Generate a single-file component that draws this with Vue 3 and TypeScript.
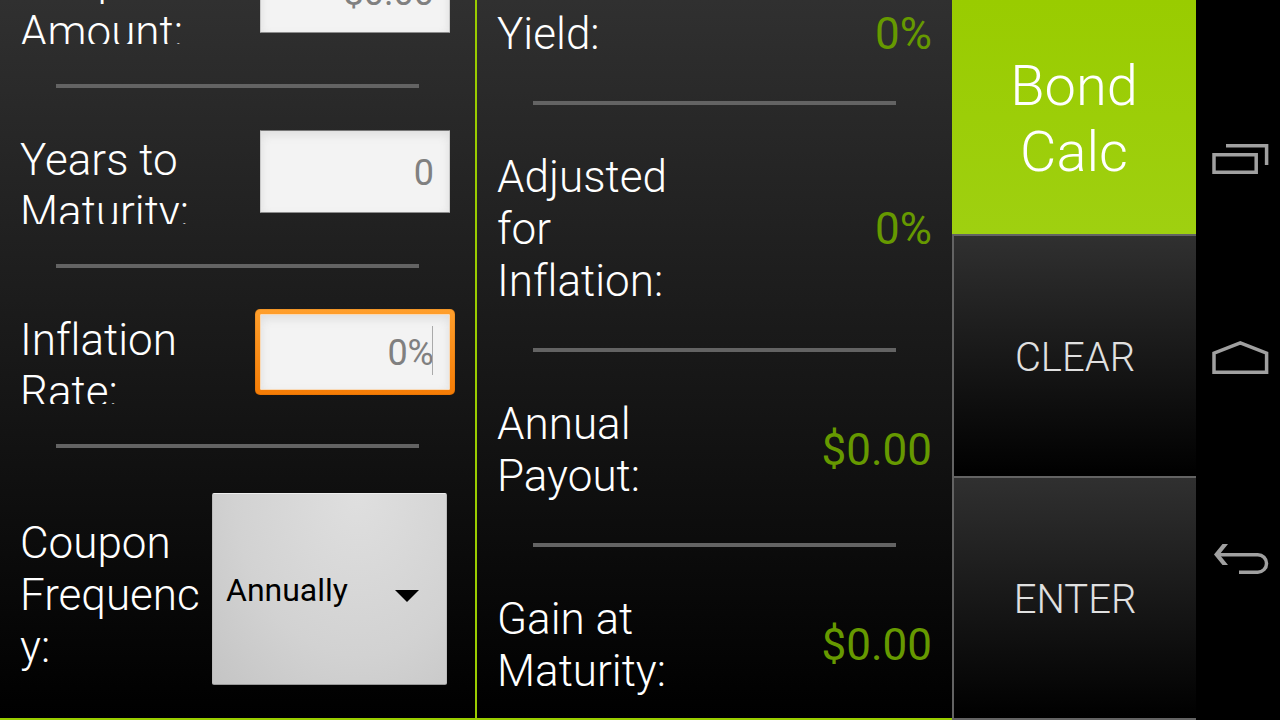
<script setup lang="ts">
import { ref } from 'vue'

interface Field {
  id: string
  label: string
  hint: string
  active: boolean
}

interface Result {
  label: string
  value: string
}

const fields: Field[] = [
  { id: 'amount', label: 'Coupon Amount:', hint: '$0.00', active: false },
  { id: 'years', label: 'Years to Maturity:', hint: '0', active: false },
  { id: 'inflation', label: 'Inflation Rate:', hint: '0%', active: true },
]

const results: Result[] = [
  { label: 'Yield:', value: '0%' },
  { label: 'Adjusted for Inflation:', value: '0%' },
  { label: 'Annual Payout:', value: '$0.00' },
  { label: 'Gain at Maturity:', value: '$0.00' },
]

const values = ref<Record<string, string>>({ amount: '', years: '', inflation: '' })
const frequency = ref('Annually')

function clearAll(): void {
  values.value = { amount: '', years: '', inflation: '' }
}
</script>

<template>
  <div class="screen">
    <form class="panel inputs" @submit.prevent>
      <div v-for="f in fields" :key="f.id" class="group">
        <div class="row field-row">
          <label class="label clipped" :for="f.id">{{ f.label }}</label>
          <div class="field" :class="{ active: f.active }">
            <input :id="f.id" v-model="values[f.id]" type="text" :placeholder="f.hint" />
          </div>
        </div>
        <hr class="divider" />
      </div>
      <div class="row frequency-row">
        <label class="label" for="frequency">Coupon Frequency:</label>
        <div class="spinner">
          <select id="frequency" v-model="frequency">
            <option>Annually</option>
          </select>
          <svg class="arrow" viewBox="0 0 24 12" aria-hidden="true"><path d="M0 0H24L12 12Z" /></svg>
        </div>
      </div>
    </form>

    <section class="panel results">
      <div v-for="(r, i) in results" :key="r.label" class="group">
        <div class="row result-row">
          <span class="label">{{ r.label }}</span>
          <output class="value">{{ r.value }}</output>
        </div>
        <hr v-if="i < results.length - 1" class="divider" />
      </div>
    </section>

    <aside class="actions">
      <h1 class="title">Bond<br />Calc</h1>
      <button class="action" type="button" @click="clearAll">CLEAR</button>
      <button class="action" type="button">ENTER</button>
    </aside>

    <nav class="system">
      <button type="button" aria-label="Recent apps">
        <svg viewBox="0 0 84 60">
          <path class="line" d="M18 24.8H60.2V42.2H18ZM30 15.8H70.6V35" />
        </svg>
      </button>
      <button type="button" aria-label="Home">
        <svg viewBox="0 0 84 60">
          <path class="line" d="M18 42.3V23.2L44.3 12.8L70.6 23.2V42.3Z" />
        </svg>
      </button>
      <button type="button" aria-label="Back">
        <svg viewBox="0 0 84 60">
          <path class="line" d="M22 24.7H61.8A8.75 8.75 0 0 1 61.8 42.2H43" />
          <path class="solid" d="M26.5 14H32L23.5 24.6L32 35H26.5L18 24.6Z" />
        </svg>
      </button>
    </nav>
  </div>
</template>

<style>
body {
  margin: 0;
  background: #000;
}
</style>

<style scoped>
.screen {
  display: grid;
  grid-template-columns: 477fr 475fr 244fr 84px;
  height: 100vh;
  overflow: hidden;
  background: #000;
  color: #fff;
  font-family: Roboto, 'Liberation Sans', sans-serif;
  font-weight: 300;
  font-variant-ligatures: none;
}

.screen * {
  box-sizing: border-box;
}

.panel {
  display: flex;
  flex-direction: column;
  justify-content: flex-end;
  min-width: 0;
  min-height: 0;
  overflow: hidden;
  margin: 0;
  border-bottom: 2px solid #9c0;
  background: linear-gradient(#303030, #000);
}

.inputs {
  border-right: 2px solid #9c0;
}

.group,
.row {
  flex-shrink: 0;
}

.row {
  display: flex;
  justify-content: space-between;
}

.label {
  width: 184px;
  font-size: 44px;
  line-height: 52px;
  overflow-wrap: anywhere;
}

.clipped {
  height: 90px;
  margin-top: 4px;
  overflow: hidden;
}

.field-row {
  height: 176px;
  padding: 42px 25px 0 20px;
}

.divider {
  height: 4px;
  margin: 0 56px;
  border: 0;
  background: #636363;
}

.field {
  position: relative;
  width: 190px;
  height: 83px;
}

.field input {
  width: 100%;
  height: 100%;
  padding: 2px 15px 0;
  border: 1px solid #c8c8c8;
  border-top-color: #777;
  border-bottom-color: #8c8c8c;
  border-radius: 1px;
  outline: 0;
  background: #f3f3f3;
  box-shadow: inset 0 4px 10px #dedede;
  color: #000;
  font: 400 36px Roboto, 'Liberation Sans', sans-serif;
  text-align: right;
}

.field input::placeholder {
  color: #808080;
  opacity: 1;
}

.field.active {
  width: 200px;
  height: 86px;
  margin: -1px -5px 0 0;
  padding: 5px;
  border-radius: 5px;
  background: linear-gradient(#ff9f2c, #f57c05);
  box-shadow: inset 0 0 1px #7a3d00;
}

.field.active input {
  border-color: #f9d9b6;
}

.field.active::after {
  content: '';
  position: absolute;
  top: 17px;
  right: 22px;
  width: 1px;
  height: 49px;
  background: #aaa;
}

.frequency-row {
  height: 270px;
  padding: 45px 28px 0 20px;
}

.frequency-row .label {
  padding-top: 24px;
}

.spinner {
  position: relative;
  width: 235px;
  height: 192px;
}

.spinner select {
  width: 100%;
  height: 100%;
  padding: 2px 60px 0 13px;
  border: 1px solid #bbb;
  border-top-color: #eee;
  border-bottom-color: #999;
  border-radius: 2px;
  appearance: none;
  background: radial-gradient(ellipse at 62% 0, #dfdfdf, #d2d2d2 60%, #c4c4c4 100%);
  color: #000;
  font: 400 32px Roboto, 'Liberation Sans', sans-serif;
}

.arrow {
  position: absolute;
  top: 97px;
  right: 28px;
  width: 24px;
  height: 12px;
  pointer-events: none;
}

.result-row {
  align-items: center;
  padding: 46px 20px 41px;
}

.group:last-child .result-row {
  padding-bottom: 21px;
}

.value {
  color: #690;
  font-size: 44px;
  font-weight: 400;
  line-height: 52px;
}

.actions {
  display: grid;
  grid-template-rows: 234fr 242fr 244fr;
  min-height: 0;
}

.title {
  display: flex;
  align-items: center;
  justify-content: center;
  margin: 0;
  padding-top: 4px;
  background: linear-gradient(#9c0, #9fd010);
  font-size: 56px;
  font-weight: 300;
  line-height: 66px;
  text-align: center;
}

.action {
  padding: 2px 0 0;
  border: 0 solid #636363;
  border-width: 2px 0 0 2px;
  background: linear-gradient(#303030, #000);
  color: #e0e0e0;
  font: 300 40px Roboto, 'Liberation Sans', sans-serif;
}

.action:last-child {
  border-bottom-width: 2px;
}

.system {
  display: flex;
  flex-direction: column;
  align-items: center;
  padding: 60px 0;
  background: #000;
}

.system button {
  display: flex;
  flex: 1;
  align-items: center;
  padding: 0;
  border: 0;
  background: none;
}

.system svg {
  width: 84px;
  height: 60px;
}

.line {
  fill: none;
  stroke: #a0a0a0;
  stroke-width: 3.5;
}

.solid {
  fill: #a0a0a0;
}
</style>
